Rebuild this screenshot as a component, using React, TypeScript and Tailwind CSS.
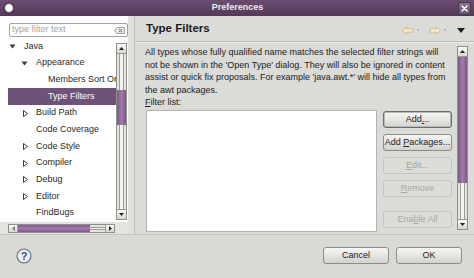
import React from "react";

const FONT = "font-['Liberation_Sans',Arial,sans-serif]";

function U({ children }: { children: React.ReactNode }) {
  return <span className="underline underline-offset-[1px]">{children}</span>;
}

function Btn({
  children,
  w,
  disabled,
  focus,
}: {
  children: React.ReactNode;
  w: string;
  disabled?: boolean;
  focus?: boolean;
}) {
  const base = "h-[17px] flex items-center justify-center rounded-[3px] text-[9px] leading-none shrink-0 whitespace-pre";
  const cls = disabled
    ? "border border-[#c4c4c0] bg-[#dcdcd8] text-[#a9a9a5]"
    : focus
    ? "border border-[#6a6a68] bg-gradient-to-b from-[#f6f6f4] to-[#d4d4d0] text-[#222] shadow-[inset_0_0_0_1px_#b8b8b4]"
    : "border border-[#8c8c88] bg-gradient-to-b from-[#f6f6f4] to-[#d2d2ce] text-[#222]";
  return (
    <div className={`${base} ${cls} ${w}`}>
      <span>{children}</span>
    </div>
  );
}

function VScroll({
  before,
  thumb,
  after,
}: {
  before: string;
  thumb: string;
  after: string;
}) {
  return (
    <div className="w-[11px] h-full flex flex-col border border-[#8e8e8a] bg-[#e4e4e0]">
      <div className="h-[10px] shrink-0 flex items-center justify-center bg-gradient-to-b from-[#fafaf8] to-[#d6d6d2] border-b border-[#9a9a96]">
        <svg width="5" height="3" viewBox="0 0 5 3">
          <path d="M0 3 L2.5 0 L5 3 Z" fill="#222" />
        </svg>
      </div>
      <div className={`${before} flex justify-center`}>
        <div className="w-[5px] h-full border-x border-[#9a9a96] bg-[#f2f2f0]" />
      </div>
      <div className={`${thumb} bg-gradient-to-r from-[#7e5a89] via-[#a07aaa] to-[#7e5a89]`} />
      <div className={`${after} flex justify-center`}>
        <div className="w-[5px] h-full border-x border-[#9a9a96] bg-[#f2f2f0]" />
      </div>
      <div className="h-[10px] shrink-0 flex items-center justify-center bg-gradient-to-b from-[#fafaf8] to-[#d6d6d2] border-t border-[#9a9a96]">
        <svg width="5" height="3" viewBox="0 0 5 3">
          <path d="M0 0 L2.5 3 L5 0 Z" fill="#222" />
        </svg>
      </div>
    </div>
  );
}

function Down() {
  return (
    <svg width="7" height="5" viewBox="0 0 7 5" className="shrink-0">
      <path d="M0.5 0.5 L6.5 0.5 L3.5 4.5 Z" fill="#3a3a3a" />
    </svg>
  );
}
function Right() {
  return (
    <svg width="5" height="7" viewBox="0 0 5 7" className="shrink-0">
      <path d="M0.5 0.5 L4.5 3.5 L0.5 6.5 Z" fill="none" stroke="#3a3a3a" strokeWidth="1" />
    </svg>
  );
}

function Row({
  indent,
  icon,
  label,
  selected,
}: {
  indent: string;
  icon?: "down" | "right";
  label: string;
  selected?: boolean;
}) {
  return (
    <div
      className={`h-[16.7px] shrink-0 flex items-center whitespace-nowrap text-[9px] ${
        selected ? "bg-[#6e5277] text-white" : "text-[#2a2a2a]"
      }`}
    >
      <div className={`${indent} shrink-0 flex items-center justify-end pr-[8px]`}>
        {icon === "down" ? <Down /> : icon === "right" ? <Right /> : null}
      </div>
      <span>{label}</span>
    </div>
  );
}

export default function App() {
  return (
    <div className={`w-[474px] h-[278px] bg-[#d9d9d5] flex flex-col overflow-hidden ${FONT}`}>
      {/* Title bar */}
      <div className="h-[16px] shrink-0 flex items-center bg-gradient-to-b from-[#6b4d72] to-[#533957] px-[3px]">
        <svg width="12" height="12" viewBox="0 0 12 12" className="shrink-0">
          <circle cx="6" cy="6" r="5.3" fill="#3b2a40" />
          <circle cx="6" cy="6" r="4.2" fill="#f2f0f2" stroke="#888" strokeWidth="0.6" strokeDasharray="1.2 0.8" />
          <circle cx="6" cy="6" r="2.6" fill="#ffffff" />
        </svg>
        <div className="flex-1 text-center text-[9px] font-bold text-[#efeaf0] pl-[2px]">Preferences</div>
        <div className="w-[13px] h-[13px] rounded-[2px] bg-gradient-to-b from-[#8a7390] to-[#6a5470] border border-[#4a364e] flex items-center justify-center">
          <svg width="7" height="7" viewBox="0 0 7 7">
            <path d="M1 1 L6 6 M6 1 L1 6" stroke="#fff" strokeWidth="1.5" strokeLinecap="round" />
          </svg>
        </div>
      </div>

      {/* Main */}
      <div className="h-[218px] shrink-0 flex">
        {/* Left pane */}
        <div className="w-[128px] shrink-0 bg-white flex flex-col">
          <div className="mt-[7px] ml-[9px] h-[14px] shrink-0 border border-[#a2a29e] rounded-[2px] flex items-center pl-[2px] pr-[2px] bg-white">
            <span className="flex-1 text-[9px] text-[#a3a3a3] whitespace-nowrap">type filter text</span>
            <svg width="11" height="7" viewBox="0 0 11 7" className="shrink-0">
              <path d="M3 0.5 L10.5 0.5 L10.5 6.5 L3 6.5 L0.5 3.5 Z" fill="#e8e8e6" stroke="#8a8a88" strokeWidth="0.8" />
              <path d="M5 2 L8 5 M8 2 L5 5" stroke="#666" strokeWidth="0.9" />
            </svg>
          </div>
          <div className="flex-1 min-h-0 flex">
            <div className="w-[116px] shrink-0 pl-[8px] pt-[1px] flex flex-col overflow-hidden">
              <Row indent="w-[16px]" icon="down" label="Java" />
              <Row indent="w-[28px]" icon="down" label="Appearance" />
              <Row indent="w-[40px]" label="Members Sort Or" />
              <Row indent="w-[40px]" label="Type Filters" selected />
              <Row indent="w-[28px]" icon="right" label="Build Path" />
              <Row indent="w-[28px]" label="Code Coverage" />
              <Row indent="w-[28px]" icon="right" label="Code Style" />
              <Row indent="w-[28px]" icon="right" label="Compiler" />
              <Row indent="w-[28px]" icon="right" label="Debug" />
              <Row indent="w-[28px]" icon="right" label="Editor" />
              <Row indent="w-[28px]" label="FindBugs" />
            </div>
            <div className="w-[12px] shrink-0 pt-[6px] pb-[2px] flex">
              <VScroll before="h-[36px]" thumb="h-[35px]" after="flex-1" />
            </div>
          </div>
          <div className="h-[12px] shrink-0 bg-[#e3e3df] flex items-center pl-[8px]">
            <div className="w-[107px] h-[9px] flex border border-[#8e8e8a] bg-[#e4e4e0]">
              <div className="w-[9px] shrink-0 flex items-center justify-center bg-gradient-to-b from-[#fafaf8] to-[#d6d6d2] border-r border-[#9a9a96]">
                <svg width="3" height="5" viewBox="0 0 3 5">
                  <path d="M3 0 L0 2.5 L3 5 Z" fill="#777" />
                </svg>
              </div>
              <div className="w-[72px] shrink-0 bg-gradient-to-b from-[#7e5a89] via-[#a07aaa] to-[#7e5a89]" />
              <div className="flex-1 flex flex-col justify-center">
                <div className="h-[3px] border-y border-[#9a9a96] bg-[#f2f2f0]" />
              </div>
              <div className="w-[9px] shrink-0 flex items-center justify-center bg-gradient-to-b from-[#fafaf8] to-[#d6d6d2] border-l border-[#9a9a96]">
                <svg width="3" height="5" viewBox="0 0 3 5">
                  <path d="M0 0 L3 2.5 L0 5 Z" fill="#222" />
                </svg>
              </div>
            </div>
          </div>
        </div>

        {/* Sash */}
        <div className="w-[6px] shrink-0 bg-[#e1e1dd]" />

        {/* Right pane */}
        <div className="flex-1 flex flex-col border-l border-[#c2c2be] bg-[#dbdbd7]">
          <div className="h-[26px] shrink-0 flex items-center pl-[11px] pr-[9px] border-b border-[#bdbdb9]">
            <span className="flex-1 text-[11.5px] font-bold text-[#1a1a1a]">Type Filters</span>
            <div className="flex items-center mt-[3px]">
              <svg width="12" height="9" viewBox="0 0 12 9">
                <path d="M0.7 4.5 L4.5 0.8 L4.5 2.8 L11.2 2.8 L11.2 6.2 L4.5 6.2 L4.5 8.2 Z" fill="#f4ecd8" stroke="#d2b77c" strokeWidth="0.9" strokeLinejoin="round" />
              </svg>
              <div className="w-[2px] h-[2px] bg-[#b8b8b4] ml-[3px] mr-[10px] -mt-[1px]" />
              <svg width="12" height="9" viewBox="0 0 12 9">
                <path d="M11.3 4.5 L7.5 0.8 L7.5 2.8 L0.8 2.8 L0.8 6.2 L7.5 6.2 L7.5 8.2 Z" fill="#f4ecd8" stroke="#d2b77c" strokeWidth="0.9" strokeLinejoin="round" />
              </svg>
              <div className="w-[2px] h-[2px] bg-[#b8b8b4] ml-[3px] mr-[11px] -mt-[1px]" />
              <svg width="8" height="5" viewBox="0 0 8 5">
                <path d="M0 0 L8 0 L4 5 Z" fill="#1e1e1e" />
              </svg>
            </div>
          </div>
          <div className="flex-1 min-h-0 flex border-t border-[#ececea]">
            <div className="flex-1 flex flex-col pl-[10px] pt-[3px] pb-[2px]">
              <div className="text-[9px] leading-[12.5px] text-[#1a1a1a] whitespace-nowrap">
                <div>All types whose fully qualified name matches the selected filter strings will</div>
                <div>not be shown in the 'Open Type' dialog. They will also be ignored in content</div>
                <div>assist or quick fix proposals. For example 'java.awt.*' will hide all types from</div>
                <div>the awt packages.</div>
                <div>
                  <U>F</U>ilter list:
                </div>
              </div>
              <div className="flex-1 flex mt-[1px] pl-[1px]">
                <div className="w-[231px] h-full bg-white border border-[#b4b4b0]" />
                <div className="ml-[6px] flex flex-col pt-[1px]">
                  <Btn w="w-[69px]" focus>
                    Add<U>.</U>..
                  </Btn>
                  <div className="h-[6px]" />
                  <Btn w="w-[69px]">
                    {"Add "}
                    <U>P</U>ackages...
                  </Btn>
                  <div className="h-[6px]" />
                  <Btn w="w-[69px]" disabled>
                    <U>E</U>dit...
                  </Btn>
                  <div className="h-[6px]" />
                  <Btn w="w-[69px]" disabled>
                    <U>R</U>emove
                  </Btn>
                  <div className="h-[14px]" />
                  <Btn w="w-[69px]" disabled>
                    Ena<U>b</U>le All
                  </Btn>
                </div>
              </div>
            </div>
            <div className="w-[11px] shrink-0 pt-[3px] pb-[4px] mr-[6px] ml-[3px] flex">
              <VScroll before="h-0" thumb="h-[126px]" after="flex-1" />
            </div>
          </div>
        </div>
      </div>

      {/* Bottom bar */}
      <div className="flex-1 flex items-center border-t border-[#c4c4c0] pl-[16px] pr-[12px]">
        <svg width="16" height="16" viewBox="0 0 16 16" className="-mt-[2px]">
          <circle cx="8" cy="8" r="7" fill="#eef0f4" stroke="#5a6a80" strokeWidth="1.1" />
          <text x="8" y="11.8" textAnchor="middle" fontSize="11" fontWeight="bold" fill="#3f5068" fontFamily="Liberation Sans, Arial, sans-serif">?</text>
        </svg>
        <div className="flex-1" />
        <div className="flex gap-[7px] -mt-[2px]">
          <Btn w="w-[66px]">Cancel</Btn>
          <Btn w="w-[66px]">OK</Btn>
        </div>
      </div>
    </div>
  );
}
